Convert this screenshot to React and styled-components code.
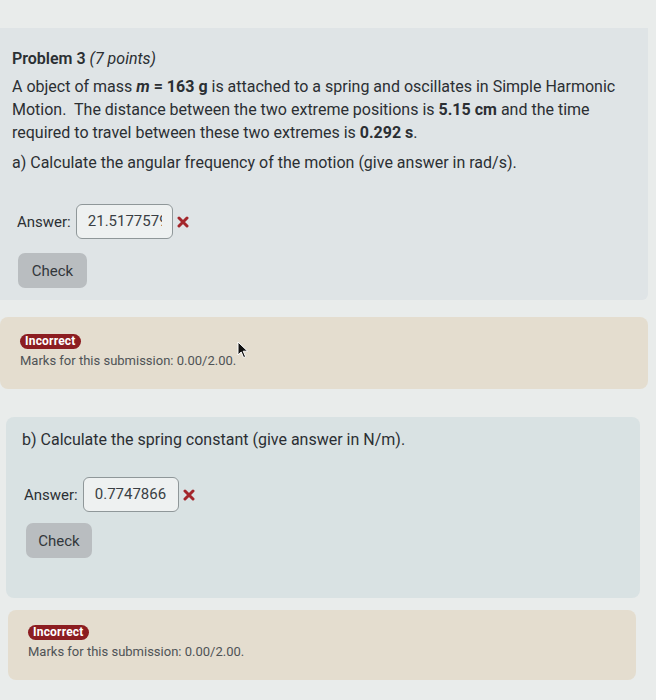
import React from "react";
import styled, { createGlobalStyle } from "styled-components";

const Global = createGlobalStyle`
    html, body {
        margin: 0;
        padding: 0;
        background: #e9eceb;
    }
    * {
        box-sizing: border-box;
    }
`;

const App = () => {
    return (
        <Page>
            <Global />
            <Question>
                <Title>
                    <b>Problem 3</b> <i>(7 points)</i>
                </Title>
                <Text>
                    A object of mass <b><i>m</i> = 163 g</b> is attached to a spring and oscillates in Simple Harmonic<br />
                    Motion.&nbsp; The distance between the two extreme positions is <b>5.15 cm</b> and the time<br />
                    required to travel between these two extremes is <b>0.292 s</b>.
                </Text>
                <Part>a) Calculate the angular frequency of the motion (give answer in rad/s).</Part>
                <AnswerRow $top={30} $left={5}>
                    <Label>Answer:</Label>
                    <Input $w={97}><Value $w={74}>21.5177579</Value></Input>
                    <Cross />
                </AnswerRow>
                <CheckBtn $top={14} $w={69} $left={6}>Check</CheckBtn>
            </Question>

            <Feedback $top={17} $left={0} $right={8} $pt={17} $pl={20} $h={72}>
                <Badge>Incorrect</Badge>
                <Marks>Marks for this submission: 0.00/2.00.</Marks>
                <Pointer viewBox="0 0 12 18">
                    <path d="M1 1 L1 14 L4.2 11 L6.6 16.6 L8.6 15.7 L6.2 10.2 L10.6 10.2 Z" fill="#111" stroke="#fff" strokeWidth="1" strokeLinejoin="round" />
                </Pointer>
            </Feedback>

            <SubQuestion>
                <Part>b) Calculate the spring constant (give answer in N/m).</Part>
                <AnswerRow $top={26} $left={2}>
                    <Label>Answer:</Label>
                    <Input $w={96}><Value $w={76}>0.7747866</Value></Input>
                    <Cross />
                </AnswerRow>
                <CheckBtn $top={11} $w={66} $left={4}>Check</CheckBtn>
            </SubQuestion>

            <Feedback $top={12} $left={8} $right={20} $pt={15} $pl={20} $h={70}>
                <Badge>Incorrect</Badge>
                <Marks>Marks for this submission: 0.00/2.00.</Marks>
            </Feedback>
        </Page>
    );
};

const Cross = () => (
    <CrossIcon viewBox="0 0 12 12">
        <path d="M2 2 L10 10 M10 2 L2 10" stroke="#a3262b" strokeWidth="3" strokeLinecap="round" />
    </CrossIcon>
);

export const Page = styled.div`
    width: 656px;
    min-height: 700px;
    padding-top: 28px;
    font-family: Roboto, "Liberation Sans", sans-serif;
    color: #2b2f33;
`;

export const Question = styled.div`
    width: 648px;
    height: 272px;
    background: #dfe4e6;
    border-radius: 0 0 6px 0;
    padding: 19px 12px 0 12px;
    display: flex;
    flex-direction: column;
    align-items: flex-start;
`;

export const Title = styled.div`
    font-size: 16px;
    line-height: 23px;
    margin-bottom: 5px;

    b {
        font-weight: 600;
    }
    i {
        font-weight: 400;
    }
`;

export const Text = styled.div`
    font-size: 16px;
    line-height: 23px;
    margin-bottom: 7px;
    white-space: nowrap;

    b {
        font-weight: 700;
    }
`;

export const Part = styled.div`
    font-size: 16px;
    line-height: 23px;
`;

export const AnswerRow = styled.div`
    margin-top: ${p => p.$top}px;
    margin-left: ${p => p.$left}px;
    display: flex;
    align-items: center;
`;

export const Label = styled.span`
    font-size: 15px;
    margin-right: 5px;
`;

export const Input = styled.div`
    width: ${p => p.$w}px;
    height: 35px;
    border: 1.5px solid #8f9799;
    border-radius: 6px;
    background: #eef1f1;
    padding: 0 11px;
    font-size: 15px;
    line-height: 32px;
    color: #3a3f44;
`;

export const Value = styled.div`
    width: ${p => p.$w}px;
    white-space: nowrap;
    overflow: hidden;
`;

export const CrossIcon = styled.svg`
    width: 12px;
    height: 12px;
    margin-left: 4px;
`;

export const CheckBtn = styled.div`
    margin-top: ${p => p.$top}px;
    margin-left: ${p => p.$left}px;
    width: ${p => p.$w}px;
    height: 35px;
    border-radius: 7px;
    background: #b9bdc0;
    display: flex;
    align-items: center;
    justify-content: center;
    font-size: 15px;
    color: #33373b;
`;

export const Feedback = styled.div`
    position: relative;
    margin: ${p => p.$top}px ${p => p.$right}px 0 ${p => p.$left}px;
    height: ${p => p.$h}px;
    background: #e4ddcf;
    border-radius: 8px;
    padding: ${p => p.$pt}px 0 0 ${p => p.$pl}px;
    display: flex;
    flex-direction: column;
    align-items: flex-start;
`;

export const Badge = styled.span`
    background: #8c1d21;
    color: #fff;
    font-size: 12px;
    font-weight: 700;
    line-height: 15px;
    padding: 0 5px;
    border-radius: 8px;
    letter-spacing: 0.2px;
`;

export const Marks = styled.div`
    margin-top: 3px;
    font-size: 13px;
    line-height: 18px;
    color: #4f5356;
`;

export const Pointer = styled.svg`
    position: absolute;
    left: 237px;
    top: 24px;
    width: 12px;
    height: 18px;
`;

export const SubQuestion = styled.div`
    margin: 28px 16px 0 6px;
    height: 181px;
    background: #d9e2e3;
    border-radius: 8px;
    padding: 11px 16px 0 16px;
    display: flex;
    flex-direction: column;
    align-items: flex-start;
`;

export default App;
